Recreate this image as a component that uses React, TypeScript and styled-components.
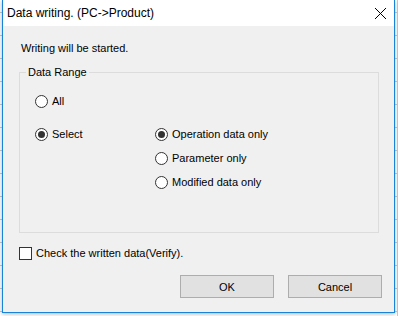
import styled, { createGlobalStyle } from "styled-components";

const GlobalStyle = createGlobalStyle`
  html, body {
    margin: 0;
    padding: 0;
  }
  body {
    width: 398px;
    height: 316px;
    overflow: hidden;
    background-color: #ffffff;
    background-image: repeating-linear-gradient(
      to bottom,
      transparent 0,
      transparent 12px,
      #c9c9c9 12px,
      #c9c9c9 13px,
      transparent 13px,
      transparent 23px
    );
    font-family: "Liberation Sans", Arial, sans-serif;
    color: #000;
  }
`;

const Page = styled.div`
  box-sizing: border-box;
  width: 398px;
  height: 316px;
  padding-left: 2px;
  border-right: 1px solid #c9c9c9;
  display: flex;
  align-items: flex-start;
`;

const Window = styled.div`
  box-sizing: border-box;
  width: 393px;
  height: 313px;
  border: 1px solid #1883d7;
  border-top: none;
  background: #f0f0f0;
  box-shadow: 0 1px 4px rgba(0, 0, 0, 0.3);
  display: flex;
  flex-direction: column;
`;

const TitleBar = styled.div`
  height: 26px;
  flex-shrink: 0;
  background: #ffffff;
  display: flex;
  align-items: center;
  justify-content: space-between;
  padding: 0 8px 0 4px;
  font-size: 12px;
`;

const Title = styled.span`
  line-height: 16px;
  margin-top: -1px;
`;

const Body = styled.div`
  display: flex;
  flex-direction: column;
  padding: 15px 12px 0 16px;
  font-size: 11px;
`;

const Intro = styled.div`
  line-height: 14px;
  padding-left: 2px;
`;

const Group = styled.div`
  position: relative;
  box-sizing: border-box;
  width: 360px;
  height: 161px;
  margin-top: 17px;
  border: 1px solid #dcdcdc;
  padding: 21px 0 0 15px;
`;

const Legend = styled.span`
  position: absolute;
  top: -8px;
  left: 6px;
  padding: 0 2px;
  line-height: 14px;
  background: #f0f0f0;
`;

const Option = styled.label`
  display: flex;
  align-items: center;
  gap: 4px;
  height: 14px;
  line-height: 14px;
  white-space: nowrap;
`;

const Radio = styled.span<{ $checked?: boolean }>`
  box-sizing: border-box;
  width: 13px;
  height: 13px;
  border: 1px solid #333333;
  border-radius: 50%;
  background: #ffffff;
  display: flex;
  align-items: center;
  justify-content: center;
  &::after {
    content: "";
    width: 7px;
    height: 7px;
    border-radius: 50%;
    background: ${(p) => (p.$checked ? "#333333" : "transparent")};
  }
`;

const SelectRow = styled.div`
  display: flex;
  margin-top: 19px;
`;

const SelectColumn = styled.div`
  width: 120px;
`;

const SubOptions = styled.div`
  display: flex;
  flex-direction: column;
  gap: 10px;
`;

const CheckRow = styled(Option)`
  margin-top: 13px;
`;

const CheckBox = styled.span`
  box-sizing: border-box;
  width: 13px;
  height: 13px;
  border: 1px solid #333333;
  background: #ffffff;
`;

const Buttons = styled.div`
  display: flex;
  justify-content: flex-end;
  gap: 14px;
  margin-top: 15px;
`;

const Button = styled.button`
  box-sizing: border-box;
  width: 94px;
  height: 23px;
  border: 1px solid #adadad;
  background: #e1e1e1;
  font-family: inherit;
  font-size: 11px;
  color: #000;
  padding: 0;
`;

function CloseIcon() {
  return (
    <svg width="11" height="11" viewBox="0 0 11 11" shapeRendering="crispEdges">
      <path d="M0 0 L11 11 M11 0 L0 11" stroke="#000" strokeWidth="1" />
    </svg>
  );
}

export default function App() {
  return (
    <>
      <GlobalStyle />
      <Page>
        <Window>
          <TitleBar>
            <Title>Data writing. (PC-&gt;Product)</Title>
            <CloseIcon />
          </TitleBar>
          <Body>
            <Intro>Writing will be started.</Intro>
            <Group>
              <Legend>Data Range</Legend>
              <Option>
                <Radio />
                All
              </Option>
              <SelectRow>
                <SelectColumn>
                  <Option>
                    <Radio $checked />
                    Select
                  </Option>
                </SelectColumn>
                <SubOptions>
                  <Option>
                    <Radio $checked />
                    Operation data only
                  </Option>
                  <Option>
                    <Radio />
                    Parameter only
                  </Option>
                  <Option>
                    <Radio />
                    Modified data only
                  </Option>
                </SubOptions>
              </SelectRow>
            </Group>
            <CheckRow>
              <CheckBox />
              Check the written data(Verify).
            </CheckRow>
            <Buttons>
              <Button>OK</Button>
              <Button>Cancel</Button>
            </Buttons>
          </Body>
        </Window>
      </Page>
    </>
  );
}
